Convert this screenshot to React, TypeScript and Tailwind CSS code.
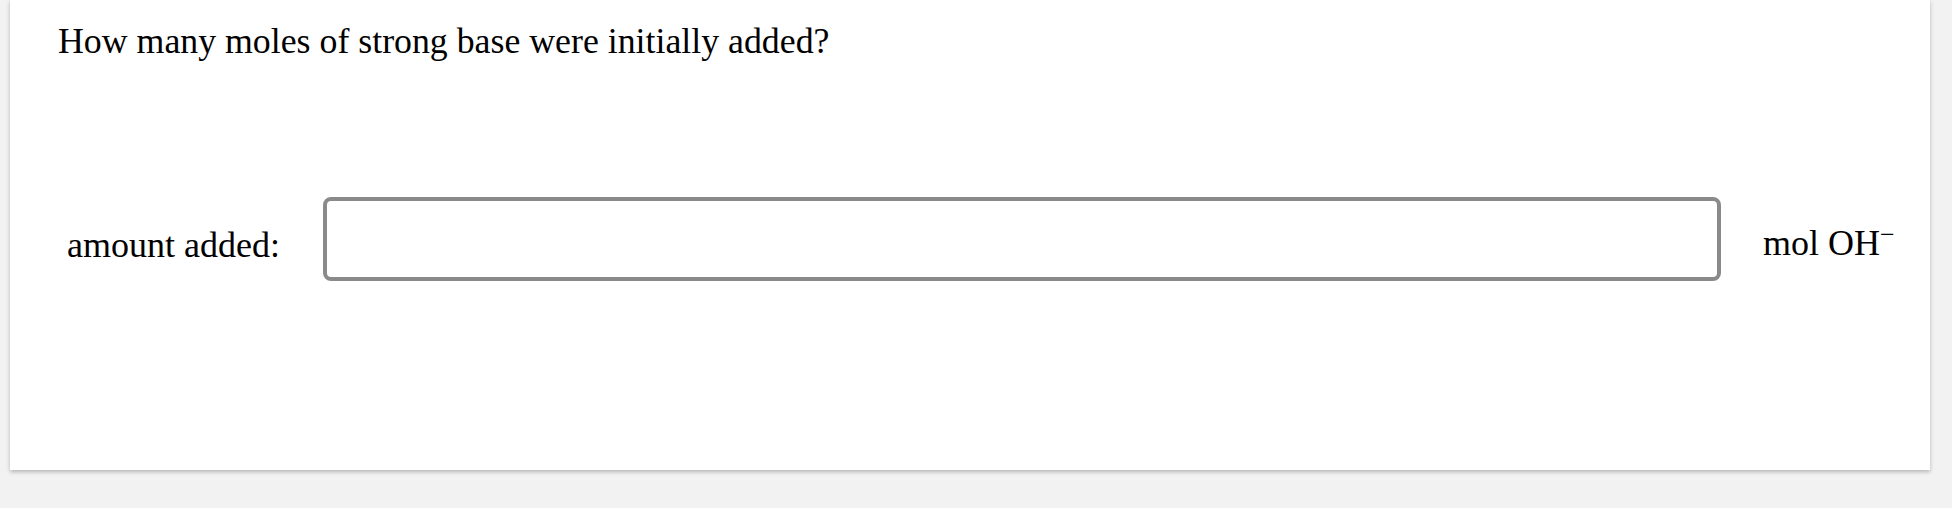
export default function App() {
  return (
    <div className="w-[1952px] h-[508px] bg-[#f2f2f2] overflow-hidden font-['Liberation_Serif','Times_New_Roman',serif] text-black">
      <div className="ml-[10px] w-[1920px] h-[470px] bg-white shadow-[0_2px_4px_rgba(0,0,0,0.25)] flex flex-col">
        {/* question */}
        <p className="pt-[23px] pl-[48px] text-[35.8px] leading-[36px]">
          How many moles of strong base were initially added?
        </p>

        {/* answer row */}
        <div className="mt-[138px] flex items-start pl-[57px]">
          <label htmlFor="amount" className="mt-[30px] text-[36px] leading-[36px] whitespace-nowrap">
            amount added:
          </label>
          <input
            id="amount"
            type="text"
            className="ml-[43px] w-[1398px] h-[84px] rounded-[8px] border-[4px] border-[#8a8a8a] bg-white outline-none"
          />
          <span className="ml-[42px] mt-[28px] text-[36px] leading-[36px] whitespace-nowrap">
            mol OH<sup className="text-[26px] top-[-12px]">−</sup>
          </span>
        </div>
      </div>
    </div>
  );
}
